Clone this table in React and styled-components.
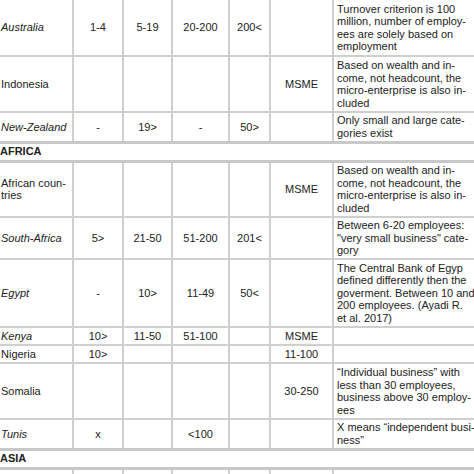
import styled, { createGlobalStyle } from 'styled-components';

const GlobalStyle = createGlobalStyle`
  html, body {
    margin: 0;
    padding: 0;
    background: #ffffff;
    overflow: hidden;
  }
`;

const rows = [
  { h: 57, country: 'Australia', italic: true, cells: ['1-4', '5-19', '20-200', '200<', ''], note: ['Turnover criterion is 100', 'million, number of employ-', 'ees are solely based on', 'employment'] },
  { h: 56, country: 'Indonesia', cells: ['', '', '', '', 'MSME'], note: ['Based on wealth and in-', 'come, not headcount, the', 'micro-enterprise is also in-', 'cluded'] },
  { h: 30, country: 'New-Zealand', italic: true, cells: ['-', '19>', '-', '50>', ''], note: ['Only small and large cate-', 'gories exist'] },
  { h: 19, section: 'AFRICA' },
  { h: 56, country: ['African coun-', 'tries'], cells: ['', '', '', '', 'MSME'], note: ['Based on wealth and in-', 'come, not headcount, the', 'micro-enterprise is also in-', 'cluded'] },
  { h: 42, country: 'South-Africa', italic: true, cells: ['5>', '21-50', '51-200', '201<', ''], note: ['Between 6-20 employees:', '"very small business" cate-', 'gory'] },
  { h: 68, country: 'Egypt', italic: true, cells: ['-', '10>', '11-49', '50<', ''], note: ['The Central Bank of Egyp', 'defined differently then the', 'goverment. Between 10 and', '200 employees. (Ayadi R.', 'et al. 2017)'] },
  { h: 18, country: 'Kenya', italic: true, cells: ['10>', '11-50', '51-100', '', 'MSME'], note: [] },
  { h: 18, country: 'Nigeria', cells: ['10>', '', '', '', '11-100'], note: [] },
  { h: 56, country: 'Somalia', cells: ['', '', '', '', '30-250'], note: ['\u201cIndividual business\u201d with', 'less than 30 employees,', 'business above 30 employ-', 'ees'] },
  { h: 30, country: 'Tunis', italic: true, cells: ['x', '', '<100', '', ''], note: ['X means \u201cindependent busi-', 'ness\u201d'] },
  { h: 19, section: 'ASIA' },
  { h: 24, country: '', cells: ['', '', '', '', ''], note: [] },
];

const widths = [75, 50, 49, 57, 41, 63, 160];

const Page = styled.div`
  width: 474px;
  height: 474px;
  overflow: hidden;
  font-family: "Liberation Sans", Arial, sans-serif;
  color: #222222;
`;

const Table = styled.table`
  border-collapse: collapse;
  table-layout: fixed;
  width: ${widths.reduce((a, b) => a + b, 0)}px;
  margin: -2px 0 0 -3px;
  font-size: 11px;
  line-height: 12.5px;
`;

const Row = styled.tr`
  height: ${(p) => p.$h}px;
`;

const Cell = styled.td`
  border: 2px solid #cfcfcf;
  padding: 0 3px;
  vertical-align: middle;
  text-align: ${(p) => (p.$center ? 'center' : 'left')};
  font-style: ${(p) => (p.$italic ? 'italic' : 'normal')};
  white-space: nowrap;
  overflow: hidden;
`;

const CountryCell = styled(Cell)`
  padding-left: 2px;
`;

const SectionCell = styled.td`
  border-top: 3px solid #c8c8c8;
  border-bottom: 3px solid #c8c8c8;
  border-left: none;
  border-right: none;
  padding: 0 2px;
  font-weight: bold;
`;

function Lines({ lines }) {
  const list = Array.isArray(lines) ? lines : [lines];
  return list.map((l, i) => (
    <span key={i}>
      {i > 0 && <br />}
      {l}
    </span>
  ));
}

export default function App() {
  return (
    <Page>
      <GlobalStyle />
      <Table>
        <colgroup>
          {widths.map((w, i) => (
            <col key={i} style={{ width: w }} />
          ))}
        </colgroup>
        <tbody>
          {rows.map((row, i) => {
            if (row.section) {
              return (
                <Row key={i} $h={row.h}>
                  <SectionCell colSpan={7}>{row.section}</SectionCell>
                </Row>
              );
            }
            return (
              <Row key={i} $h={row.h}>
                <CountryCell $italic={row.italic}>
                  <Lines lines={row.country} />
                </CountryCell>
                {row.cells.map((c, j) => (
                  <Cell key={j} $center>
                    {c}
                  </Cell>
                ))}
                <Cell>
                  <Lines lines={row.note} />
                </Cell>
              </Row>
            );
          })}
        </tbody>
      </Table>
    </Page>
  );
}
